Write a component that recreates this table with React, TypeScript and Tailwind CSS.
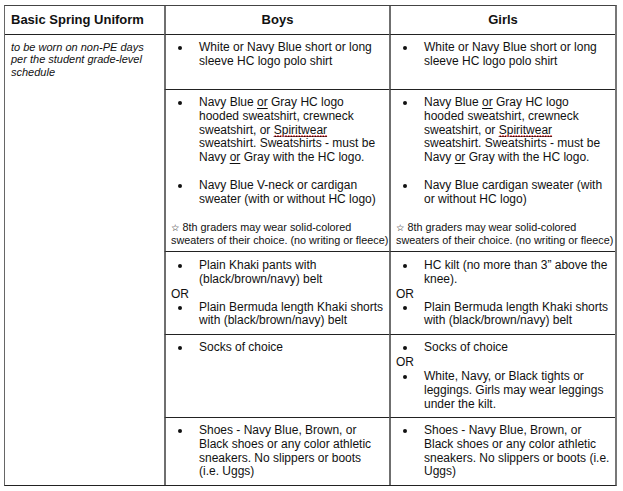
import React from 'react';

const Bullet: React.FC<{ children: React.ReactNode }> = ({ children }) => (
    <div className="flex">
        <div className="w-[28px] shrink-0 h-[14px] flex items-center pl-[7px]">
            <div className="w-[4px] h-[4px] rounded-full bg-[#111]"></div>
        </div>
        <div className="whitespace-nowrap">{children}</div>
    </div>
);

const Or = () => <span className="underline underline-offset-2">or</span>;

// spellcheck squiggle under "Spiritwear"
const Spirit = () => (
    <span className="relative inline-block leading-[13.8px]">
        <span className="underline decoration-[#111] underline-offset-2">Spiritwear</span>
        <svg className="absolute left-0 bottom-0 w-full h-[2px]" viewBox="0 0 60 2" preserveAspectRatio="none">
            <path d="M0 1.6 L1.5 0.4 L3 1.6 L4.5 0.4 L6 1.6 L7.5 0.4 L9 1.6 L10.5 0.4 L12 1.6 L13.5 0.4 L15 1.6 L16.5 0.4 L18 1.6 L19.5 0.4 L21 1.6 L22.5 0.4 L24 1.6 L25.5 0.4 L27 1.6 L28.5 0.4 L30 1.6 L31.5 0.4 L33 1.6 L34.5 0.4 L36 1.6 L37.5 0.4 L39 1.6 L40.5 0.4 L42 1.6 L43.5 0.4 L45 1.6 L46.5 0.4 L48 1.6 L49.5 0.4 L51 1.6 L52.5 0.4 L54 1.6 L55.5 0.4 L57 1.6 L58.5 0.4 L60 1.6" fill="none" stroke="#e03a3a" strokeWidth="1" vectorEffect="non-scaling-stroke" />
        </svg>
    </span>
);

const OrLine = () => <div className="h-[14px] leading-[14px]">OR</div>;

const Note = () => (
    <div className="mt-[14px] text-[10.8px] leading-[12.5px] whitespace-nowrap">
        <span style={{ fontFamily: '"DejaVu Sans", sans-serif' }} className="text-[9.5px]">☆</span> 8th graders may wear solid-colored
        <br />
        sweaters of their choice. (no writing or fleece)
    </div>
);

const Cell: React.FC<{ children?: React.ReactNode; top?: boolean }> = ({ children, top = true }) => (
    <div className={`border-l-2 border-l-[#6f6f6f] px-[5px] pt-[6px] text-[12px] leading-[13.8px] ${top ? 'border-t border-t-[#222]' : ''}`}>
        {children}
    </div>
);

export default function App() {
    return (
        <div
            className="w-[623px] h-[491px] bg-white pl-[4px] pt-[5px] text-[#111]"
            style={{ fontFamily: '"Liberation Sans", Arial, sans-serif' }}
        >
            <div className="grid w-[613px] grid-cols-[159px_225px_226px] grid-rows-[29px_54px_162px_83px_83px_68px] border-t border-t-[#444] border-l border-l-[#666] border-b border-b-[#222] border-r-2 border-r-[#777]">
                {/* Header */}
                <div className="border-b border-b-[#222] flex items-center px-[6px] text-[13px] font-bold">Basic Spring Uniform</div>
                <div className="border-b border-b-[#222] border-l-2 border-l-[#6f6f6f] flex items-center justify-center text-[13px] font-bold">Boys</div>
                <div className="border-b border-b-[#222] border-l-2 border-l-[#6f6f6f] flex items-center justify-center text-[13px] font-bold">Girls</div>

                {/* Left column */}
                <div className="row-span-5 px-[6px] pt-[6px] text-[11px] leading-[12.4px] italic whitespace-nowrap">
                    to be worn on non-PE days
                    <br />
                    per the student grade-level
                    <br />
                    schedule
                </div>

                {/* Shirts */}
                <Cell top={false}>
                    <Bullet>White or Navy Blue short or long<br />sleeve HC logo polo shirt</Bullet>
                </Cell>
                <Cell top={false}>
                    <Bullet>White or Navy Blue short or long<br />sleeve HC logo polo shirt</Bullet>
                </Cell>

                {/* Sweatshirts */}
                <Cell>
                    <Bullet>
                        Navy Blue <Or /> Gray HC logo<br />
                        hooded sweatshirt, crewneck<br />
                        sweatshirt, or <Spirit /><br />
                        sweatshirt. Sweatshirts - must be<br />
                        Navy <Or /> Gray with the HC logo.
                    </Bullet>
                    <div className="mt-[14px]">
                        <Bullet>Navy Blue V-neck or cardigan<br />sweater (with or without HC logo)</Bullet>
                    </div>
                    <Note />
                </Cell>
                <Cell>
                    <Bullet>
                        Navy Blue <Or /> Gray HC logo<br />
                        hooded sweatshirt, crewneck<br />
                        sweatshirt, or <Spirit /><br />
                        sweatshirt. Sweatshirts - must be<br />
                        Navy <Or /> Gray with the HC logo.
                    </Bullet>
                    <div className="mt-[14px]">
                        <Bullet>Navy Blue cardigan sweater (with<br />or without HC logo)</Bullet>
                    </div>
                    <Note />
                </Cell>

                {/* Bottoms */}
                <Cell>
                    <div className="pt-[1px]">
                        <Bullet>Plain Khaki pants with<br />(black/brown/navy) belt</Bullet>
                        <OrLine />
                        <Bullet>Plain Bermuda length Khaki shorts<br />with (black/brown/navy) belt</Bullet>
                    </div>
                </Cell>
                <Cell>
                    <div className="pt-[1px]">
                        <Bullet>HC kilt (no more than 3” above the<br />knee).</Bullet>
                        <OrLine />
                        <Bullet>Plain Bermuda length Khaki shorts<br />with (black/brown/navy) belt</Bullet>
                    </div>
                </Cell>

                {/* Socks */}
                <Cell>
                    <Bullet>Socks of choice</Bullet>
                </Cell>
                <Cell>
                    <Bullet>Socks of choice</Bullet>
                    <div className="h-[15px] leading-[15px]">OR</div>
                    <Bullet>White, Navy, or Black tights or<br />leggings. Girls may wear leggings<br />under the kilt.</Bullet>
                </Cell>

                {/* Shoes */}
                <Cell>
                    <Bullet>Shoes - Navy Blue, Brown, or<br />Black shoes or any color athletic<br />sneakers. No slippers or boots<br />(i.e. Uggs)</Bullet>
                </Cell>
                <Cell>
                    <Bullet>Shoes - Navy Blue, Brown, or<br />Black shoes or any color athletic<br />sneakers. No slippers or boots (i.e.<br />Uggs)</Bullet>
                </Cell>
            </div>
        </div>
    );
}
